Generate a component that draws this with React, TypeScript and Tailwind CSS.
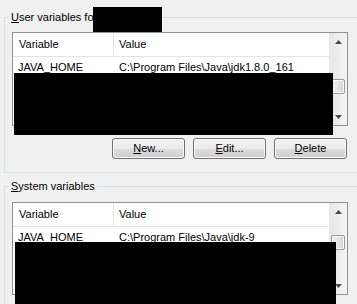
import React from "react";

function Arrow({ down }: { down?: boolean }) {
  return (
    <svg width="7" height="4" viewBox="0 0 7 4" className="block">
      {down ? (
        <polygon points="0,0 7,0 3.5,4" fill="#4a4a4a" />
      ) : (
        <polygon points="3.5,0 7,4 0,4" fill="#4a4a4a" />
      )}
    </svg>
  );
}

function Scrollbar({ thumbTop }: { thumbTop: number }) {
  return (
    <div className="flex h-full w-[18px] flex-col bg-[linear-gradient(90deg,#e6e6e6,#f4f4f4)]">
      <div className="flex h-[17px] items-center justify-center">
        <Arrow />
      </div>
      <div className="flex flex-1 flex-col px-[2px]">
        <div style={{ height: thumbTop }} />
        <div className="h-[15px] rounded-[2px] border border-[#9b9b9b] bg-[linear-gradient(90deg,#f4f4f4,#e4e4e4_50%,#d3d3d3)] shadow-[inset_0_0_0_1px_#fafafa]" />
      </div>
      <div className="flex h-[17px] items-center justify-center">
        <Arrow down />
      </div>
    </div>
  );
}

function VarList({ value, height, thumbTop }: { value: string; height: string; thumbTop: number }) {
  return (
    <div className={`flex w-[336px] border border-[#8f9297] bg-white ${height}`}>
      <div className="flex flex-1 flex-col">
        <div className="flex h-[24px] border-b border-[#e3e3e3]">
          <div className="flex w-[101px] items-center border-r border-[#e3e3e3] pl-[6px]">Variable</div>
          <div className="flex flex-1 items-center pl-[5px]">Value</div>
        </div>
        <div className="flex h-[21px] items-center">
          <div className="w-[101px] pl-[5px]">JAVA_HOME</div>
          <div className="pl-[5px]">{value}</div>
        </div>
      </div>
      <Scrollbar thumbTop={thumbTop} />
    </div>
  );
}

function Btn({ u, rest }: { u: string; rest: string }) {
  return (
    <div className="flex h-[21px] w-[73px] items-center justify-center rounded-[3px] border border-[#707070] bg-[linear-gradient(#f2f2f2_0%,#ebebeb_50%,#dddddd_50%,#cfcfcf_100%)] shadow-[inset_0_0_0_1px_#fbfbfb]">
      <span>
        <span className="underline underline-offset-[1px]">{u}</span>
        {rest}
      </span>
    </div>
  );
}

export default function App() {
  return (
    <div className="relative h-[304px] w-[357px] overflow-hidden bg-[#f0f0f0] pl-[4px] pt-[17px] font-['Liberation_Sans',Arial,sans-serif] text-[11px] leading-[13px] text-black">
      <div className="relative w-[400px] border-y border-l border-[#d5dfe5] pb-[13px] pl-[7px] pt-[14px]">
        <div className="absolute left-[4px] top-[-7px] bg-[#f0f0f0] px-[2px]">
          <span className="underline underline-offset-[1px]">U</span>ser variables for
        </div>
        <VarList value="C:\Program Files\Java\jdk1.8.0_161" height="h-[94px]" thumbTop={29} />
        <div className="mt-[12px] flex w-[335px] justify-end gap-[8px]">
          <Btn u="N" rest="ew..." />
          <Btn u="E" rest="dit..." />
          <Btn u="D" rest="elete" />
        </div>
      </div>
      <div className="relative mt-[13px] h-[200px] w-[400px] border-l border-t border-[#d5dfe5] pl-[7px] pt-[15px]">
        <div className="absolute left-[4px] top-[-7px] bg-[#f0f0f0] px-[2px]">
          <span className="underline underline-offset-[1px]">S</span>ystem variables
        </div>
        <VarList value="C:\Program Files\Java\jdk-9" height="h-[93px]" thumbTop={15} />
      </div>
      <div className="absolute left-[93px] top-[7px] h-[25px] w-[69px] bg-black" />
      <div className="absolute left-[14px] top-[73px] h-[62px] w-[319px] bg-black" />
      <div className="absolute left-[15px] top-[242px] h-[62px] w-[321px] bg-black" />
    </div>
  );
}
